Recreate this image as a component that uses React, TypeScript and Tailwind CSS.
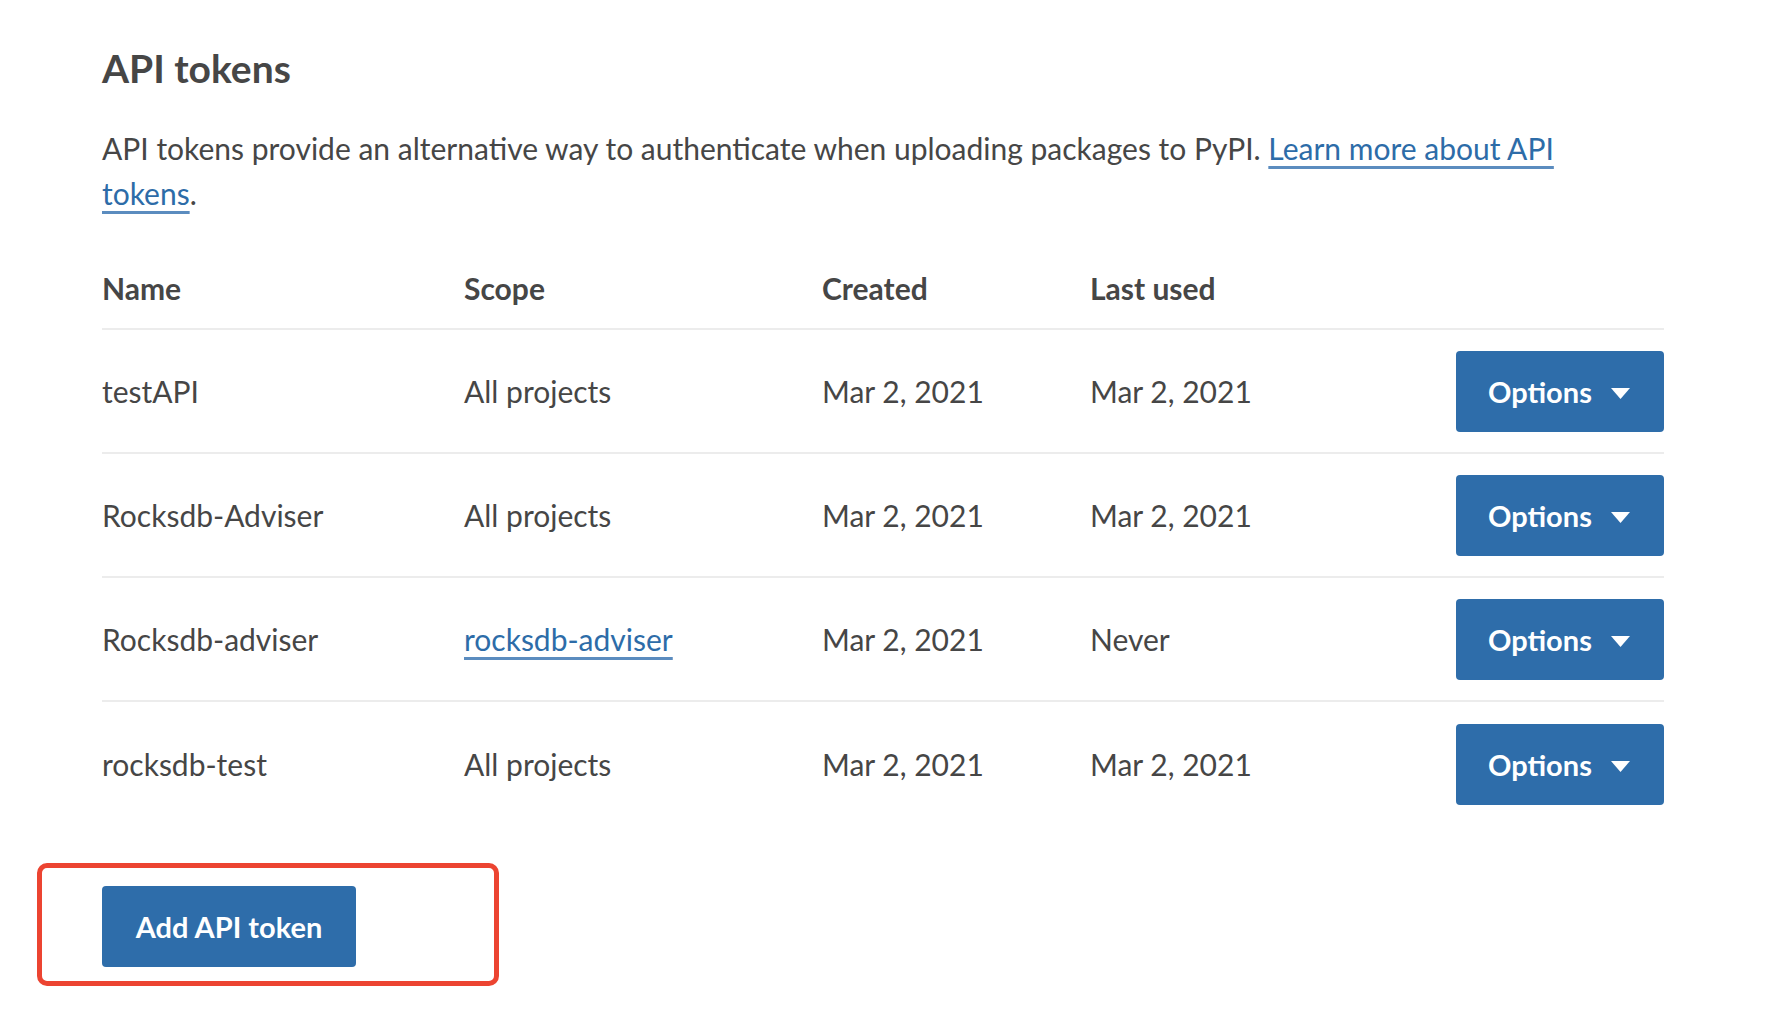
import React from 'react';

interface Token {
  name: string;
  scope: string;
  scopeLink?: boolean;
  created: string;
  lastUsed: string;
}

const tokens: Token[] = [
  { name: 'testAPI', scope: 'All projects', created: 'Mar 2, 2021', lastUsed: 'Mar 2, 2021' },
  { name: 'Rocksdb-Adviser', scope: 'All projects', created: 'Mar 2, 2021', lastUsed: 'Mar 2, 2021' },
  { name: 'Rocksdb-adviser', scope: 'rocksdb-adviser', scopeLink: true, created: 'Mar 2, 2021', lastUsed: 'Never' },
  { name: 'rocksdb-test', scope: 'All projects', created: 'Mar 2, 2021', lastUsed: 'Mar 2, 2021' },
];

const linkCls =
  'text-[#2d6ca8] underline decoration-[#5b8cbf] decoration-[3px] underline-offset-[6px]';

// caret-down (filled triangle)
function Caret() {
  return (
    <svg width="19" height="11" viewBox="0 0 19 11" className="mt-[4px]">
      <polygon points="0,0 19,0 9.5,11" fill="#fff" />
    </svg>
  );
}

function OptionsButton() {
  return (
    <button className="flex h-[81px] w-[208px] items-center rounded-[4px] bg-[#2e6daa] pl-[32px] text-[29px] font-bold text-white">
      <span>Options</span>
      <span className="ml-[19px]">
        <Caret />
      </span>
    </button>
  );
}

export default function App() {
  return (
    <div className="min-h-screen bg-white font-['Lato',sans-serif] text-[#464646]">
      <div className="w-[1664px] pl-[102px] pt-[44px]">
        <h2 className="text-[39px] font-bold leading-[48px]">API tokens</h2>

        <p className="mt-[34px] text-[30px] leading-[45px]">
          API tokens provide an alternative way to authenticate when uploading packages to PyPI.{' '}
          <a href="#" className={linkCls}>
            Learn more about API
            <br />
            tokens
          </a>
          .
        </p>

        {/* token table */}
        <div className="mt-[50px] grid grid-cols-[362px_358px_268px_1fr_auto] text-[30px] leading-[45px]">
          <div className="col-span-5 grid grid-cols-subgrid border-b-2 border-[#ececec] pb-[17px] font-bold">
            <div>Name</div>
            <div>Scope</div>
            <div>Created</div>
            <div>Last used</div>
            <div />
          </div>
          {tokens.map((t, i) => (
            <div
              key={t.name}
              className={
                'col-span-5 grid h-[124px] grid-cols-subgrid items-center ' +
                (i < tokens.length - 1 ? 'border-b-2 border-[#ececec]' : '')
              }
            >
              <div>{t.name}</div>
              <div>
                {t.scopeLink ? (
                  <a href="#" className={linkCls}>
                    {t.scope}
                  </a>
                ) : (
                  t.scope
                )}
              </div>
              <div>{t.created}</div>
              <div>{t.lastUsed}</div>
              <div className="flex justify-end">
                <OptionsButton />
              </div>
            </div>
          ))}
        </div>

        {/* highlighted add button */}
        <div className="ml-[-65px] mt-[37px] h-[123px] w-[462px] rounded-[10px] border-[5px] border-[#ec4431] pl-[60px] pt-[18px]">
          <button className="h-[81px] w-[254px] rounded-[4px] bg-[#2e6daa] text-[29px] font-bold text-white">
            Add API token
          </button>
        </div>
      </div>
    </div>
  );
}
